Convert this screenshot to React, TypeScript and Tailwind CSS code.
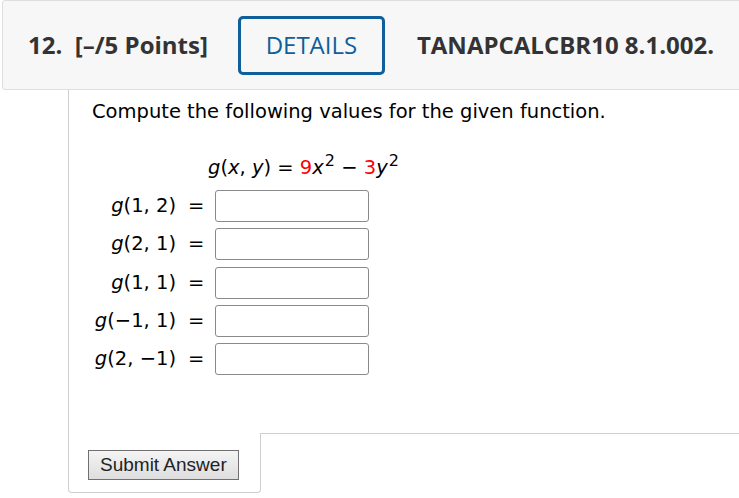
const rows = ["g(1, 2)", "g(2, 1)", "g(1, 1)", "g(\u22121, 1)", "g(2, \u22121)"];

function Label({ text }: { text: string }) {
  // italic g, rest upright
  return (
    <span>
      <i>g</i>
      {text.slice(1)}
    </span>
  );
}

export default function App() {
  return (
    <div className="w-[739px] h-[498px] overflow-hidden bg-white">
      {/* question header */}
      <div className="ml-[2px] w-[760px] h-[90px] flex items-center border border-[#dedede] rounded-[3px] bg-[#f7f7f7] pl-[25px] text-[#333] font-['Open_Sans',sans-serif]">
        <span className="text-[24px] font-bold whitespace-pre">12.  [–/5 Points]</span>
        <div className="ml-[30px] w-[147px] h-[59px] flex items-center justify-center border-[3px] border-[#0f5f9a] rounded-[5px] text-[24px] text-[#0f5f9a]">
          DETAILS
        </div>
        <span className="ml-[32px] text-[24px] font-bold">TANAPCALCBR10 8.1.002.</span>
      </div>

      {/* question body */}
      <div className="ml-[68px] border-l border-[#cfcfcf] pt-[9px] pl-[23px] pb-[58px] text-[19.5px] leading-[26px] text-black font-['DejaVu_Sans','Verdana',sans-serif]">
        <p>Compute the following values for the given function.</p>
        <p className="mt-[30px] pl-[116px]">
          <i>g</i>(<i>x</i>, <i>y</i>) = <span className="text-[#ff0000]">9</span>
          <i>x</i>
          <sup className="text-[16px] ml-[1px]">2</sup> − <span className="text-[#ff0000]">3</span>
          <i>y</i>
          <sup className="text-[16px] ml-[1px]">2</sup>
        </p>
        <div className="mt-[9px] flex flex-col gap-[6.3px]">
          {rows.map((r) => (
            <div key={r} className="flex items-center h-[32px]">
              <div className="w-[84px] text-right">
                <Label text={r} />
              </div>
              <span className="ml-[12px] w-[27px]">=</span>
              <div className="w-[154px] h-[32px] border border-[#8a8a8a] rounded-[3px] bg-white" />
            </div>
          ))}
        </div>
      </div>

      {/* submit area */}
      <div className="flex">
        <div className="ml-[68px] w-[193px] h-[60px] border-l border-r border-b border-[#cfcfcf] rounded-b-[4px] flex items-start pl-[19px] pt-[17px]">
          <button className="h-[30px] px-[11px] border border-[#707070] bg-gradient-to-b from-[#f4f4f4] to-[#dedede] text-[19px] leading-[28px] text-[#222] font-['Liberation_Sans',Arial,sans-serif]">
            Submit Answer
          </button>
        </div>
        <div className="flex-1 border-t border-[#cfcfcf]" />
      </div>
    </div>
  );
}
